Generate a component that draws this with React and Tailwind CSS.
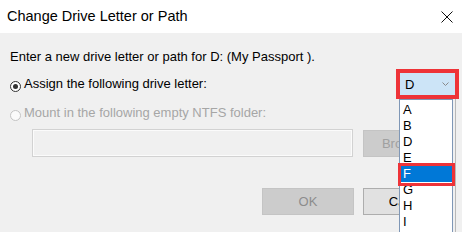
const letters = ['A', 'B', 'D', 'E', 'F', 'G', 'H', 'I'];

function CloseIcon() {
  return (
    <svg width="12" height="12" viewBox="0 0 12 12" className="block">
      <path d="M0.5 0.5 L11.5 11.5 M11.5 0.5 L0.5 11.5" stroke="#111" strokeWidth="1" fill="none" />
    </svg>
  );
}

function Chevron() {
  return (
    <svg width="7" height="4" viewBox="0 0 7 4" className="block">
      <path d="M0.5 0.5 L3.5 3.5 L6.5 0.5" stroke="#8a8a8a" strokeWidth="1" fill="none" />
    </svg>
  );
}

function Radio({ checked, disabled }) {
  return (
    <span
      className={
        'flex w-[11px] h-[11px] mt-[4px] rounded-full border items-center justify-center flex-shrink-0 ' +
        (disabled ? 'border-[#c4c4c4] bg-[#fafafa]' : 'border-[#333333] bg-white')
      }
    >
      {checked && <span className="w-[5px] h-[5px] rounded-full bg-[#333333]" />}
    </span>
  );
}

function DriveDropdown() {
  return (
    <div className="relative w-[63px] h-[30px] border-4 border-[#ee3338]">
      <div className="flex h-full items-center justify-between pl-[5px] pr-[6px] bg-[#cce4f7]">
        <span className="text-[13px] leading-none">D</span>
        <Chevron />
      </div>
      <div className="absolute left-[-1px] top-[26px] w-[54px] h-[140px] bg-white border border-[#7f97b6] pt-[2px] shadow-[2px_0_0_0_#f0f0f0,3px_0_0_0_#b8b8b8] z-10">
        {letters.map((l) => (
          <div
            key={l}
            className={
              'h-[16px] leading-[16px] pl-[3px] text-[13px] ' +
              (l === 'F' ? 'bg-[#0078d7] text-white' : 'text-black')
            }
          >
            {l}
          </div>
        ))}
        <div className="absolute left-[-2px] top-[63px] w-[57px] h-[23px] border-[3px] border-[#ee3338]" />
      </div>
    </div>
  );
}

export default function App() {
  return (
    <div
      className="relative w-[462px] h-[232px] overflow-hidden bg-[#f0f0f0] text-black"
      style={{ fontFamily: '"Liberation Sans", Arial, sans-serif' }}
    >
      <div className="flex h-[33px] items-center justify-between bg-white pl-[7px] pr-[9px]">
        <span className="text-[14.5px] leading-none">Change Drive Letter or Path</span>
        <CloseIcon />
      </div>

      <div className="flex flex-col pl-[10px] pt-[16px] text-[13px] leading-[16px]">
        <p>Enter a new drive letter or path for D: (My Passport ).</p>

        <div className="flex mt-[4px] h-[30px] items-center justify-between pr-[3px]">
          <label className="flex items-center gap-[3px]">
            <Radio checked />
            <span>Assign the following drive letter:</span>
          </label>
          <DriveDropdown />
        </div>

        <label className="flex mt-[6px] h-[16px] items-center gap-[3px] text-[#a6a6a6]">
          <Radio disabled />
          <span>Mount in the following empty NTFS folder:</span>
        </label>

        <div className="flex mt-[8px] pl-[22px] gap-[10px] items-start">
          <div className="w-[321px] h-[28px] border border-[#d2d2d2] bg-[#f0f0f0] shadow-[inset_0_0_0_1px_#fbfbfb]" />
          <button className="mt-[1px] w-[92px] h-[27px] bg-[#cccccc] border border-[#c4c4c4] text-[#a0a0a0]">
            Browse...
          </button>
        </div>

        <div className="flex mt-[31px] justify-end gap-[9px] pr-[7px]">
          <button className="w-[92px] h-[27px] bg-[#cccccc] border border-[#c4c4c4] text-[#8c8c8c]">OK</button>
          <button className="w-[92px] h-[27px] bg-[#e1e1e1] border border-[#adadad] text-black">Cancel</button>
        </div>
      </div>
    </div>
  );
}
